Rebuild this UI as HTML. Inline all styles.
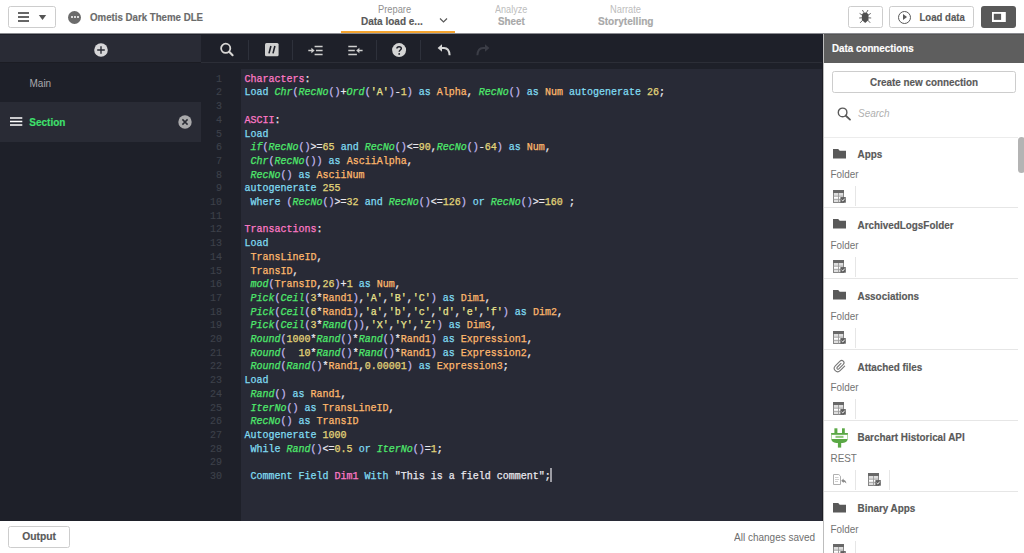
<!DOCTYPE html>
<html><head><meta charset="utf-8">
<style>
*{margin:0;padding:0;box-sizing:border-box}
html,body{width:1024px;height:553px;overflow:hidden;background:#fff;font-family:"Liberation Sans",sans-serif;position:relative}
.a{position:absolute}
.hdr{left:0;top:0;width:1024px;height:34px;background:#fff}
.btn{position:absolute;border:1px solid #cdcdcd;border-radius:2.5px;background:#fff}
.t{position:absolute;white-space:nowrap;line-height:1;transform:scaleY(1.1);transform-origin:0 0}
.dark{left:0;top:34px;width:1024px;height:486.5px;background:#1e2029}
.code{font-family:"Liberation Mono",monospace;font-size:10px;line-height:13.71px;white-space:pre;color:#f8f8f2;-webkit-text-stroke:0.25px currentColor}
.ln{font-family:"Liberation Mono",monospace;font-size:10px;line-height:13.71px;white-space:pre;color:#3d404a;text-align:right;-webkit-text-stroke:0.15px currentColor}
.k{color:#80dcf2}
.p{color:#ff79c6}
.f{color:#4ee86c;font-style:italic}
.s{color:#e8e38c}
.n{color:#e3d67a}
.o{color:#ffb86c}
.b{color:#c3b8ee}
.w{color:#e8e8ee}
.sep{position:absolute;width:1px;background:#2e313b}
.nm{font-size:9.9px;font-weight:bold;color:#595959;-webkit-text-stroke:0.15px currentColor}
.t[style*="font-weight:bold"]{-webkit-text-stroke:0.15px currentColor}
.ty{font-size:9.9px;color:#737373}
</style></head><body>
<!-- header -->
<div class="a hdr">
  <div class="btn" style="left:8px;top:6px;width:48px;height:22px"></div>
  <div class="a" style="left:18px;top:12px;width:11px;height:2px;background:#666"></div>
  <div class="a" style="left:18px;top:16px;width:11px;height:2px;background:#666"></div>
  <div class="a" style="left:18px;top:20px;width:11px;height:2px;background:#666"></div>
  <svg class="a" style="left:38px;top:14px" width="10" height="8" viewBox="0 0 10 8"><path d="M0.8 1 H8.2 L4.5 6 Z" fill="#555"/></svg>
  <div class="a" style="left:68px;top:10.5px;width:13px;height:13px;border-radius:50%;background:#6b6b6b"></div>
  <div class="a" style="left:70.9px;top:16.1px;width:2px;height:2px;border-radius:50%;background:#fff"></div>
  <div class="a" style="left:74px;top:16.1px;width:2px;height:2px;border-radius:50%;background:#fff"></div>
  <div class="a" style="left:77.1px;top:16.1px;width:2px;height:2px;border-radius:50%;background:#fff"></div>
  <div class="t" style="left:90px;top:11.5px;font-size:9.7px;font-weight:bold;color:#6b6b6b">Ometis Dark Theme DLE</div>

  <div class="t" style="left:378px;top:5px;font-size:9.3px;color:#909090">Prepare</div>
  <div class="t" style="left:361px;top:16px;font-size:10px;font-weight:bold;color:#595959">Data load e...</div>
  <svg class="a" style="left:439px;top:17px" width="9" height="7" viewBox="0 0 9 7"><path d="M1 1.5 L4.5 5 L8 1.5" fill="none" stroke="#595959" stroke-width="1.2"/></svg>
  <div class="a" style="left:341px;top:31px;width:114px;height:2px;background:#f3a32f"></div>
  <div class="t" style="left:495px;top:5px;font-size:9.1px;color:#bdbdbd">Analyze</div>
  <div class="t" style="left:498px;top:16px;font-size:9.8px;font-weight:bold;color:#a8a8a8">Sheet</div>
  <div class="t" style="left:610px;top:5px;font-size:9.3px;color:#bdbdbd">Narrate</div>
  <div class="t" style="left:598px;top:16px;font-size:10.1px;font-weight:bold;color:#a8a8a8">Storytelling</div>

  <div class="btn" style="left:848px;top:6px;width:35px;height:22px"></div>
  <div class="btn" style="left:889px;top:6px;width:85px;height:22px"></div>
  <div class="a" style="left:898px;top:10.5px;width:13px;height:13px;border-radius:50%;border:1.3px solid #595959"></div>
  <div class="a" style="left:903px;top:14px;width:0;height:0;border-top:3px solid transparent;border-bottom:3px solid transparent;border-left:4.5px solid #595959"></div>
  <div class="t" style="left:919.5px;top:11.5px;font-size:9.6px;font-weight:bold;color:#595959">Load data</div>
  <div class="a" style="left:981px;top:6px;width:35px;height:22px;border-radius:3px;background:#595959"></div>

  <svg class="a" style="left:857px;top:9px" width="16" height="15" viewBox="0 0 16 15"><path d="M7 3.8 L5.4 1 M9.4 3.8 L11 1 M5.4 6.2 L2.6 4.4 M11 6.2 L13.8 4.4 M5.2 8.8 L2.2 9 M11.2 8.8 L14.2 9 M5.6 11.2 L3.2 13.8 M10.8 11.2 L13.2 13.8" stroke="#6a6a6a" stroke-width="1"/><path d="M8.2 3.4 C10.3 3.4 11.5 4.7 11.5 6.5 V11 L8.2 14 L4.9 11 V6.5 C4.9 4.7 6.1 3.4 8.2 3.4 Z" fill="#505050"/></svg>
  <svg class="a" style="left:991.5px;top:12px" width="14" height="10" viewBox="0 0 14 10"><rect x="0" y="0" width="13.8" height="10" fill="#fff"/><rect x="1.8" y="1.8" width="7.3" height="6.1" fill="#595959"/></svg>
</div>
<div class="a" style="left:0;top:33px;width:1024px;height:1px;background:#8a8b90"></div>
<div class="a" style="left:0;top:34px;width:1024px;height:1px;background:#16171e"></div>

<!-- dark main area -->
<div class="a dark"></div>
<!-- left panel -->
<div class="a" style="left:0;top:35px;width:201px;height:27px;background:#292b35"></div>
<div class="a" style="left:0;top:62px;width:201px;height:1px;background:#1b1c23"></div>
<div class="a" style="left:0;top:102px;width:201px;height:40px;background:#292b35"></div>
<div class="t" style="left:29.5px;top:77.7px;font-size:10px;color:#a9a9ad">Main</div>
<div class="t" style="left:29.3px;top:117px;font-size:10px;font-weight:bold;color:#3fe16d">Section</div>

<!-- toolbar -->
<div class="a" style="left:201px;top:62px;width:622px;height:1px;background:#2c2e37"></div>
<div class="sep" style="left:248px;top:40px;height:20px"></div>
<div class="sep" style="left:292px;top:40px;height:20px"></div>
<div class="sep" style="left:376px;top:40px;height:20px"></div>
<div class="sep" style="left:420px;top:40px;height:20px"></div>


<!-- left plus -->
<svg class="a" style="left:93.5px;top:42.8px" width="14" height="14" viewBox="0 0 14 14"><circle cx="7" cy="7" r="6.8" fill="#d6d6d8"/><path d="M3.2 7 H10.8 M7 3.2 V10.8" stroke="#2a2c35" stroke-width="1.4"/></svg>
<!-- section hamburger -->
<svg class="a" style="left:9.8px;top:117px" width="13" height="9" viewBox="0 0 13 9"><path d="M0 1 H12.3 M0 4.5 H12.3 M0 8 H12.3" stroke="#fff" stroke-width="1.5"/></svg>
<!-- close -->
<svg class="a" style="left:178.2px;top:114.6px" width="14" height="14" viewBox="0 0 14 14"><circle cx="7" cy="7" r="6.7" fill="#a9a9ab"/><path d="M4.4 4.4 L9.6 9.6 M9.6 4.4 L4.4 9.6" stroke="#2a2c35" stroke-width="1.5"/></svg>
<!-- search -->
<svg class="a" style="left:219px;top:41.9px" width="16" height="15" viewBox="0 0 16 15"><circle cx="6.7" cy="6.3" r="4.6" fill="none" stroke="#d8d6d4" stroke-width="1.8"/><path d="M10.2 9.8 L13.6 13.2" stroke="#d8d6d4" stroke-width="2.1" stroke-linecap="round"/></svg>
<!-- comment -->
<svg class="a" style="left:264.5px;top:43.2px" width="14" height="14" viewBox="0 0 14 14"><rect x="0" y="0" width="13.6" height="13.2" rx="1.5" fill="#cfcfcf"/><path d="M5.9 3 L4 10.4 M9.9 3 L8 10.4" stroke="#1e2029" stroke-width="1.6"/></svg>
<!-- indent -->
<svg class="a" style="left:308px;top:44.5px" width="16" height="11" viewBox="0 0 16 11"><path d="M6.6 1.5 H14.6 M8 5.5 H14.6 M6.6 9.5 H14.6" stroke="#cfcfcf" stroke-width="1.5"/><path d="M0.3 5.5 H4" stroke="#cfcfcf" stroke-width="1.5"/><path d="M3.4 2.8 L6.6 5.5 L3.4 8.2 Z" fill="#cfcfcf"/></svg>
<!-- outdent -->
<svg class="a" style="left:347.5px;top:44.5px" width="16" height="11" viewBox="0 0 16 11"><path d="M0.3 1.5 H8.9 M0.3 5.5 H6.8 M0.3 9.5 H8.9" stroke="#cfcfcf" stroke-width="1.5"/><path d="M11 5.5 H14.6" stroke="#cfcfcf" stroke-width="1.5"/><path d="M11.4 2.8 L8.2 5.5 L11.4 8.2 Z" fill="#cfcfcf"/></svg>
<!-- help -->
<svg class="a" style="left:392.2px;top:42.7px" width="15" height="15" viewBox="0 0 15 15"><circle cx="7.1" cy="7.1" r="7" fill="#d4d4d4"/><path d="M4.9 5.6 C4.9 3.1 9.3 3.1 9.3 5.4 C9.3 7 7.2 7 7.2 8.8" fill="none" stroke="#1e2029" stroke-width="1.5"/><circle cx="7.2" cy="10.9" r="0.95" fill="#1e2029"/></svg>
<!-- undo -->
<svg class="a" style="left:437px;top:44px" width="14" height="12" viewBox="0 0 14 12"><path d="M0.6 4 L5 0.3 V7.7 Z" fill="#d8d8d8"/><path d="M4.5 4 H7 C10.5 4 12.3 6.2 12.6 11.3" fill="none" stroke="#d8d8d8" stroke-width="2"/></svg>
<!-- redo -->
<svg class="a" style="left:476px;top:44px" width="14" height="12" viewBox="0 0 14 12"><path d="M13.4 4 L9 0.3 V7.7 Z" fill="#3b3d46"/><path d="M9.5 4 H7 C3.5 4 1.7 6.2 1.4 11.3" fill="none" stroke="#3b3d46" stroke-width="2"/></svg>

<!-- code area -->
<div class="a" style="left:241px;top:68.5px;width:581px;height:452px;background:#282a36"></div>


<div class="a ln" style="left:196px;top:72.7px;width:26px">1
2
3
4
5
6
7
8
9
10
11
12
13
14
15
16
17
18
19
20
21
22
23
24
25
26
27
28
29
30</div>

<div class="a code" style="left:244.5px;top:72.7px"><span class="p">Characters</span><span class="w">:</span>
<span class="k">Load</span> <span class="f">Chr</span><span class="b">(</span><span class="f">RecNo</span><span class="b">()</span><span class="w">+</span><span class="f">Ord</span><span class="b">(</span><span class="s">'A'</span><span class="b">)</span><span class="w">-</span><span class="n">1</span><span class="b">)</span> <span class="k">as</span> <span class="o">Alpha</span><span class="w">,</span> <span class="f">RecNo</span><span class="b">()</span> <span class="k">as</span> <span class="o">Num</span> <span class="k">autogenerate</span> <span class="n">26</span><span class="w">;</span>

<span class="p">ASCII</span><span class="w">:</span>
<span class="k">Load</span>
 <span class="f">if</span><span class="b">(</span><span class="f">RecNo</span><span class="b">()</span><span class="w">&gt;=</span><span class="n">65</span> <span class="k">and</span> <span class="f">RecNo</span><span class="b">()</span><span class="w">&lt;=</span><span class="n">90</span><span class="w">,</span><span class="f">RecNo</span><span class="b">()</span><span class="w">-</span><span class="n">64</span><span class="b">)</span> <span class="k">as</span> <span class="o">Num</span><span class="w">,</span>
 <span class="f">Chr</span><span class="b">(</span><span class="f">RecNo</span><span class="b">())</span> <span class="k">as</span> <span class="o">AsciiAlpha</span><span class="w">,</span>
 <span class="f">RecNo</span><span class="b">()</span> <span class="k">as</span> <span class="o">AsciiNum</span>
<span class="k">autogenerate</span> <span class="n">255</span>
 <span class="k">Where</span> <span class="b">(</span><span class="f">RecNo</span><span class="b">()</span><span class="w">&gt;=</span><span class="n">32</span> <span class="k">and</span> <span class="f">RecNo</span><span class="b">()</span><span class="w">&lt;=</span><span class="n">126</span><span class="b">)</span> <span class="k">or</span> <span class="f">RecNo</span><span class="b">()</span><span class="w">&gt;=</span><span class="n">160</span> <span class="w">;</span>

<span class="p">Transactions</span><span class="w">:</span>
<span class="k">Load</span>
 <span class="o">TransLineID</span><span class="w">,</span>
 <span class="o">TransID</span><span class="w">,</span>
 <span class="f">mod</span><span class="b">(</span><span class="o">TransID</span><span class="w">,</span><span class="n">26</span><span class="b">)</span><span class="w">+</span><span class="n">1</span> <span class="k">as</span> <span class="o">Num</span><span class="w">,</span>
 <span class="f">Pick</span><span class="b">(</span><span class="f">Ceil</span><span class="b">(</span><span class="n">3</span><span class="w">*</span><span class="o">Rand1</span><span class="b">)</span><span class="w">,</span><span class="s">'A'</span><span class="w">,</span><span class="s">'B'</span><span class="w">,</span><span class="s">'C'</span><span class="b">)</span> <span class="k">as</span> <span class="o">Dim1</span><span class="w">,</span>
 <span class="f">Pick</span><span class="b">(</span><span class="f">Ceil</span><span class="b">(</span><span class="n">6</span><span class="w">*</span><span class="o">Rand1</span><span class="b">)</span><span class="w">,</span><span class="s">'a'</span><span class="w">,</span><span class="s">'b'</span><span class="w">,</span><span class="s">'c'</span><span class="w">,</span><span class="s">'d'</span><span class="w">,</span><span class="s">'e'</span><span class="w">,</span><span class="s">'f'</span><span class="b">)</span> <span class="k">as</span> <span class="o">Dim2</span><span class="w">,</span>
 <span class="f">Pick</span><span class="b">(</span><span class="f">Ceil</span><span class="b">(</span><span class="n">3</span><span class="w">*</span><span class="f">Rand</span><span class="b">())</span><span class="w">,</span><span class="s">'X'</span><span class="w">,</span><span class="s">'Y'</span><span class="w">,</span><span class="s">'Z'</span><span class="b">)</span> <span class="k">as</span> <span class="o">Dim3</span><span class="w">,</span>
 <span class="f">Round</span><span class="b">(</span><span class="n">1000</span><span class="w">*</span><span class="f">Rand</span><span class="b">()</span><span class="w">*</span><span class="f">Rand</span><span class="b">()</span><span class="w">*</span><span class="o">Rand1</span><span class="b">)</span> <span class="k">as</span> <span class="o">Expression1</span><span class="w">,</span>
 <span class="f">Round</span><span class="b">(</span>  <span class="n">10</span><span class="w">*</span><span class="f">Rand</span><span class="b">()</span><span class="w">*</span><span class="f">Rand</span><span class="b">()</span><span class="w">*</span><span class="o">Rand1</span><span class="b">)</span> <span class="k">as</span> <span class="o">Expression2</span><span class="w">,</span>
 <span class="f">Round</span><span class="b">(</span><span class="f">Rand</span><span class="b">()</span><span class="w">*</span><span class="o">Rand1</span><span class="w">,</span><span class="n">0.00001</span><span class="b">)</span> <span class="k">as</span> <span class="o">Expression3</span><span class="w">;</span>
<span class="k">Load</span>
 <span class="f">Rand</span><span class="b">()</span> <span class="k">as</span> <span class="o">Rand1</span><span class="w">,</span>
 <span class="f">IterNo</span><span class="b">()</span> <span class="k">as</span> <span class="o">TransLineID</span><span class="w">,</span>
 <span class="f">RecNo</span><span class="b">()</span> <span class="k">as</span> <span class="o">TransID</span>
<span class="k">Autogenerate</span> <span class="n">1000</span>
 <span class="k">While</span> <span class="f">Rand</span><span class="b">()</span><span class="w">&lt;=</span><span class="n">0.5</span> <span class="k">or</span> <span class="f">IterNo</span><span class="b">()</span><span class="w">=</span><span class="n">1</span><span class="w">;</span>

 <span class="k">Comment</span> <span class="k">Field</span> <span class="p">Dim1</span> <span class="k">With</span> <span class="w">"This is a field comment"</span><span class="w">;</span></div>
<div class="a" style="left:550px;top:468px;width:1.8px;height:14px;background:#9c9ca4"></div>

<!-- right panel -->
<div class="a" style="left:822px;top:35px;width:1px;height:485.5px;background:#1c1d25"></div>

<div class="a" style="left:823px;top:35px;width:201px;height:518px;background:#fff"></div>
<div class="a" style="left:823px;top:34px;width:201px;height:28.5px;background:#5e5e5e;border-top:1px solid #555"></div>
<div class="a" style="left:823px;top:34px;width:1px;height:519px;background:#bdbdbd"></div>
<div class="t" style="left:832px;top:42.5px;font-size:9.8px;font-weight:bold;color:#fff">Data connections</div>
<div class="btn" style="left:831.5px;top:71px;width:184.5px;height:22px"></div>
<div class="t" style="left:870px;top:76.5px;font-size:9.9px;font-weight:bold;color:#595959">Create new connection</div>
<div class="t" style="left:858px;top:108px;font-size:10px;font-style:italic;color:#b0b0b0">Search</div>

<svg class="a" style="left:837px;top:107px" width="15" height="14" viewBox="0 0 15 14"><circle cx="5.6" cy="5.4" r="4.3" fill="none" stroke="#595959" stroke-width="1.4"/><path d="M8.6 8.5 L13 12.6" stroke="#595959" stroke-width="1.8" stroke-linecap="round"/></svg>
<div class="a" style="left:824px;top:137px;width:193.5px;height:1px;background:#ececec"></div>
<div class="a" style="left:1017.5px;top:137px;width:7px;height:35.5px;border-radius:3.5px;background:#b4b4b4"></div>
<!-- items -->
<svg class="a" style="left:833px;top:148.5px" width="13" height="10" viewBox="0 0 13 10"><path d="M0 0 H5.2 L6.7 1.8 H13 V9.6 H0 Z" fill="#595959"/></svg>
<div class="t nm" style="left:857.5px;top:148.8px">Apps</div>
<div class="t ty" style="left:830.5px;top:169.0px">Folder</div>
<svg class="a" style="left:833.2px;top:189.5px" width="13" height="13" viewBox="0 0 13 13"><rect x="0.5" y="3" width="10" height="3" fill="#dedede"/><rect x="0.5" y="9.3" width="10" height="3.2" fill="#dedede"/><rect x="0.5" y="0.5" width="10" height="12" fill="none" stroke="#858585" stroke-width="1"/><rect x="0" y="0" width="11" height="3" fill="#686868"/><path d="M0.5 6.2 H10.5 M0.5 9.3 H10.5 M5.5 3 V12.5" stroke="#9a9a9a" stroke-width="0.9"/><rect x="7.4" y="7.1" width="5.4" height="5.6" fill="#5e5e5e"/><path d="M8.6 9.9 L9.8 11 L11.7 8.6" fill="none" stroke="#fff" stroke-width="0.9"/></svg>
<div class="a" style="left:855px;top:186.0px;width:1px;height:20px;background:#e6e6e6"></div>
<div class="a" style="left:824px;top:207.4px;width:193.5px;height:1px;background:#e6e6e6"></div>
<svg class="a" style="left:833px;top:219.4px" width="13" height="10" viewBox="0 0 13 10"><path d="M0 0 H5.2 L6.7 1.8 H13 V9.6 H0 Z" fill="#595959"/></svg>
<div class="t nm" style="left:857.5px;top:219.7px">ArchivedLogsFolder</div>
<div class="t ty" style="left:830.5px;top:239.9px">Folder</div>
<svg class="a" style="left:833.2px;top:260.4px" width="13" height="13" viewBox="0 0 13 13"><rect x="0.5" y="3" width="10" height="3" fill="#dedede"/><rect x="0.5" y="9.3" width="10" height="3.2" fill="#dedede"/><rect x="0.5" y="0.5" width="10" height="12" fill="none" stroke="#858585" stroke-width="1"/><rect x="0" y="0" width="11" height="3" fill="#686868"/><path d="M0.5 6.2 H10.5 M0.5 9.3 H10.5 M5.5 3 V12.5" stroke="#9a9a9a" stroke-width="0.9"/><rect x="7.4" y="7.1" width="5.4" height="5.6" fill="#5e5e5e"/><path d="M8.6 9.9 L9.8 11 L11.7 8.6" fill="none" stroke="#fff" stroke-width="0.9"/></svg>
<div class="a" style="left:855px;top:256.9px;width:1px;height:20px;background:#e6e6e6"></div>
<div class="a" style="left:824px;top:278.3px;width:193.5px;height:1px;background:#e6e6e6"></div>
<svg class="a" style="left:833px;top:290.3px" width="13" height="10" viewBox="0 0 13 10"><path d="M0 0 H5.2 L6.7 1.8 H13 V9.6 H0 Z" fill="#595959"/></svg>
<div class="t nm" style="left:857.5px;top:290.6px">Associations</div>
<div class="t ty" style="left:830.5px;top:310.8px">Folder</div>
<svg class="a" style="left:833.2px;top:331.3px" width="13" height="13" viewBox="0 0 13 13"><rect x="0.5" y="3" width="10" height="3" fill="#dedede"/><rect x="0.5" y="9.3" width="10" height="3.2" fill="#dedede"/><rect x="0.5" y="0.5" width="10" height="12" fill="none" stroke="#858585" stroke-width="1"/><rect x="0" y="0" width="11" height="3" fill="#686868"/><path d="M0.5 6.2 H10.5 M0.5 9.3 H10.5 M5.5 3 V12.5" stroke="#9a9a9a" stroke-width="0.9"/><rect x="7.4" y="7.1" width="5.4" height="5.6" fill="#5e5e5e"/><path d="M8.6 9.9 L9.8 11 L11.7 8.6" fill="none" stroke="#fff" stroke-width="0.9"/></svg>
<div class="a" style="left:855px;top:327.8px;width:1px;height:20px;background:#e6e6e6"></div>
<div class="a" style="left:824px;top:349.2px;width:193.5px;height:1px;background:#e6e6e6"></div>
<svg class="a" style="left:831.5px;top:357.7px" width="16" height="16" viewBox="0 0 16 16"><g transform="translate(4.4 1.25) rotate(45 3.6 6.75)"><path d="M2.5 4.2 V9.6 A1.15 1.15 0 0 0 4.8 9.6 V3.6 M7 3.6 V10 A3.4 3.4 0 0 1 0.2 10 V3.3 A2.3 2.3 0 0 1 4.8 3.3" fill="none" stroke="#777" stroke-width="1.1" stroke-linecap="round"/><path d="M7 3.6 A2.3 2.3 0 0 0 4.8 1.1" fill="none" stroke="#777" stroke-width="0"/></g></svg>
<div class="t nm" style="left:857.5px;top:361.5px">Attached files</div>
<div class="t ty" style="left:830.5px;top:381.7px">Folder</div>
<svg class="a" style="left:833.2px;top:402.2px" width="13" height="13" viewBox="0 0 13 13"><rect x="0.5" y="3" width="10" height="3" fill="#dedede"/><rect x="0.5" y="9.3" width="10" height="3.2" fill="#dedede"/><rect x="0.5" y="0.5" width="10" height="12" fill="none" stroke="#858585" stroke-width="1"/><rect x="0" y="0" width="11" height="3" fill="#686868"/><path d="M0.5 6.2 H10.5 M0.5 9.3 H10.5 M5.5 3 V12.5" stroke="#9a9a9a" stroke-width="0.9"/><rect x="7.4" y="7.1" width="5.4" height="5.6" fill="#5e5e5e"/><path d="M8.6 9.9 L9.8 11 L11.7 8.6" fill="none" stroke="#fff" stroke-width="0.9"/></svg>
<div class="a" style="left:855px;top:398.7px;width:1px;height:20px;background:#e6e6e6"></div>
<div class="a" style="left:824px;top:420.1px;width:193.5px;height:1px;background:#e6e6e6"></div>
<svg class="a" style="left:831px;top:427.6px" width="17" height="20" viewBox="0 0 17 20"><rect x="3.4" y="0.3" width="3" height="5" fill="#5aa845"/><rect x="11" y="0.3" width="2.8" height="5" fill="#5aa845"/><rect x="0.1" y="5" width="16.8" height="1.9" fill="#5aa845"/><rect x="0.1" y="6.9" width="16.8" height="4" fill="#fff"/><rect x="0.1" y="6.9" width="0.8" height="4" fill="#9fd08f"/><rect x="16.1" y="6.9" width="0.8" height="4" fill="#9fd08f"/><path d="M4.5 7.8 H12.5 V9.9 H4.5 Z" fill="#8cc67a"/><path d="M0.3 10.9 H16.7 C16.5 13.6 14 14.9 10.2 14.9 H6.8 C3 14.9 0.5 13.6 0.3 10.9 Z" fill="#5aa845"/><rect x="6.9" y="14" width="3.3" height="5.6" fill="#5aa845"/></svg>
<div class="t nm" style="left:857.5px;top:432.4px">Barchart Historical API</div>
<div class="t ty" style="left:830.5px;top:452.6px">REST</div>
<svg class="a" style="left:833px;top:474.1px" width="14" height="11" viewBox="0 0 14 11"><path d="M0.5 0.5 H5.8 L7.5 2.2 V10.5 H0.5 Z" fill="#fff" stroke="#b0b0b0" stroke-width="1"/><path d="M2 3.5 H5.5 M2 5.5 H6 M2 7.5 H5" stroke="#c4c4c4" stroke-width="0.8"/><path d="M8.2 6.8 L10.6 4.6 V5.9 C12.3 5.9 13.2 7.3 13.4 9.6 C12.7 8.4 11.8 7.9 10.6 7.9 V9.1 Z" fill="#8a8a8a"/></svg>
<div class="a" style="left:855px;top:469.6px;width:1px;height:20px;background:#e6e6e6"></div>
<svg class="a" style="left:867.5px;top:472.9px" width="13" height="13" viewBox="0 0 13 13"><rect x="0.5" y="3" width="10" height="3" fill="#dedede"/><rect x="0.5" y="9.3" width="10" height="3.2" fill="#dedede"/><rect x="0.5" y="0.5" width="10" height="12" fill="none" stroke="#858585" stroke-width="1"/><rect x="0" y="0" width="11" height="3" fill="#686868"/><path d="M0.5 6.2 H10.5 M0.5 9.3 H10.5 M5.5 3 V12.5" stroke="#9a9a9a" stroke-width="0.9"/><rect x="7.4" y="7.1" width="5.4" height="5.6" fill="#5e5e5e"/><path d="M8.6 9.9 L9.8 11 L11.7 8.6" fill="none" stroke="#fff" stroke-width="0.9"/></svg>
<div class="a" style="left:889px;top:469.6px;width:1px;height:20px;background:#e6e6e6"></div>
<div class="a" style="left:824px;top:491.0px;width:193.5px;height:1px;background:#e6e6e6"></div>
<svg class="a" style="left:833px;top:503.0px" width="13" height="10" viewBox="0 0 13 10"><path d="M0 0 H5.2 L6.7 1.8 H13 V9.6 H0 Z" fill="#595959"/></svg>
<div class="t nm" style="left:857.5px;top:503.3px">Binary Apps</div>
<div class="t ty" style="left:830.5px;top:523.5px">Folder</div>
<svg class="a" style="left:833.2px;top:544.0px" width="13" height="13" viewBox="0 0 13 13"><rect x="0.5" y="3" width="10" height="3" fill="#dedede"/><rect x="0.5" y="9.3" width="10" height="3.2" fill="#dedede"/><rect x="0.5" y="0.5" width="10" height="12" fill="none" stroke="#858585" stroke-width="1"/><rect x="0" y="0" width="11" height="3" fill="#686868"/><path d="M0.5 6.2 H10.5 M0.5 9.3 H10.5 M5.5 3 V12.5" stroke="#9a9a9a" stroke-width="0.9"/><rect x="7.4" y="7.1" width="5.4" height="5.6" fill="#5e5e5e"/><path d="M8.6 9.9 L9.8 11 L11.7 8.6" fill="none" stroke="#fff" stroke-width="0.9"/></svg>
<div class="a" style="left:855px;top:540.5px;width:1px;height:20px;background:#e6e6e6"></div>

<!-- /items -->
<!-- bottom bar -->
<div class="a" style="left:0;top:520.5px;width:822.5px;height:33px;background:#fff"></div>
<div class="btn" style="left:8px;top:526px;width:62px;height:21.5px"></div>
<div class="t" style="left:22.3px;top:531px;font-size:10.3px;font-weight:bold;color:#595959">Output</div>
<div class="t" style="left:734px;top:532px;font-size:10px;color:#6e6e6e">All changes saved</div>
</body></html>
